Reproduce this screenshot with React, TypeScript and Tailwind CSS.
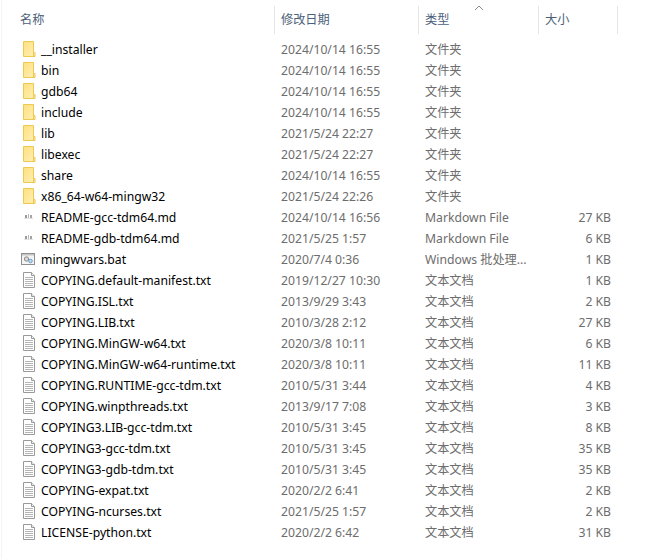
import React from "react";

type Kind = "folder" | "md" | "bat" | "txt";
type Row = [string, string, string, string, Kind];

const rows: Row[] = [
  ["__installer", "2024/10/14 16:55", "文件夹", "", "folder"],
  ["bin", "2024/10/14 16:55", "文件夹", "", "folder"],
  ["gdb64", "2024/10/14 16:55", "文件夹", "", "folder"],
  ["include", "2024/10/14 16:55", "文件夹", "", "folder"],
  ["lib", "2021/5/24 22:27", "文件夹", "", "folder"],
  ["libexec", "2021/5/24 22:27", "文件夹", "", "folder"],
  ["share", "2024/10/14 16:55", "文件夹", "", "folder"],
  ["x86_64-w64-mingw32", "2021/5/24 22:26", "文件夹", "", "folder"],
  ["README-gcc-tdm64.md", "2024/10/14 16:56", "Markdown File", "27 KB", "md"],
  ["README-gdb-tdm64.md", "2021/5/25 1:57", "Markdown File", "6 KB", "md"],
  ["mingwvars.bat", "2020/7/4 0:36", "Windows 批处理...", "1 KB", "bat"],
  ["COPYING.default-manifest.txt", "2019/12/27 10:30", "文本文档", "1 KB", "txt"],
  ["COPYING.ISL.txt", "2013/9/29 3:43", "文本文档", "2 KB", "txt"],
  ["COPYING.LIB.txt", "2010/3/28 2:12", "文本文档", "27 KB", "txt"],
  ["COPYING.MinGW-w64.txt", "2020/3/8 10:11", "文本文档", "6 KB", "txt"],
  ["COPYING.MinGW-w64-runtime.txt", "2020/3/8 10:11", "文本文档", "11 KB", "txt"],
  ["COPYING.RUNTIME-gcc-tdm.txt", "2010/5/31 3:44", "文本文档", "4 KB", "txt"],
  ["COPYING.winpthreads.txt", "2013/9/17 7:08", "文本文档", "3 KB", "txt"],
  ["COPYING3.LIB-gcc-tdm.txt", "2010/5/31 3:45", "文本文档", "8 KB", "txt"],
  ["COPYING3-gcc-tdm.txt", "2010/5/31 3:45", "文本文档", "35 KB", "txt"],
  ["COPYING3-gdb-tdm.txt", "2010/5/31 3:45", "文本文档", "35 KB", "txt"],
  ["COPYING-expat.txt", "2020/2/2 6:41", "文本文档", "2 KB", "txt"],
  ["COPYING-ncurses.txt", "2021/5/25 1:57", "文本文档", "2 KB", "txt"],
  ["LICENSE-python.txt", "2020/2/2 6:42", "文本文档", "31 KB", "txt"],
];

function Icon({ kind }: { kind: Kind }) {
  const cls = "shrink-0 self-start mt-[1px]";
  if (kind === "folder")
    return (
      <svg width="16" height="16" viewBox="0 0 16 16" className={cls}>
        <defs>
          <linearGradient id="fld" x1="0" y1="0" x2="1" y2="1">
            <stop offset="0" stopColor="#ffe07f" />
            <stop offset="1" stopColor="#fff0b8" />
          </linearGradient>
        </defs>
        <path d="M3.5 0.5h10v11h1.5v4H3.5z" fill="url(#fld)" stroke="#eec94f" />
        <path d="M13.5 11.5v4" stroke="#eec94f" />
      </svg>
    );
  if (kind === "md")
    return (
      <svg width="16" height="16" viewBox="0 0 16 16" className={cls}>
        <rect x="5" y="6" width="2" height="3" fill="#9a9a9a" />
        <rect x="8" y="5" width="1" height="4" fill="#b8b8b8" />
        <rect x="10" y="6" width="2" height="3" fill="#a4a4a4" />
        <rect x="4" y="9" width="9" height="1" fill="#e2e2e2" />
      </svg>
    );
  if (kind === "bat")
    return (
      <svg width="16" height="16" viewBox="0 0 16 16" className={cls}>
        <rect x="1.5" y="2.5" width="13" height="11" fill="#f4f4f4" stroke="#8f8f8f" />
        <rect x="2" y="3" width="12" height="1.5" fill="#c4c4c4" />
        <circle cx="6.5" cy="8" r="2.2" fill="#d8d8d8" stroke="#8c8c8c" />
        <circle cx="10.5" cy="10" r="1.8" fill="#bcdcf2" stroke="#6f9fc4" />
      </svg>
    );
  return (
    <svg width="16" height="16" viewBox="0 0 16 16" className={cls}>
      <path d="M3.5 0.5h8l3 3v12h-11z" fill="#ffffff" stroke="#9a9a9a" />
      <path d="M11.5 0.5v3h3" fill="#eeeeee" stroke="#9a9a9a" />
      <path d="M5 5.5h8M5 7.5h8M5 9.5h8M5 11.5h8M5 13.5h8" stroke="#b4b4b4" />
    </svg>
  );
}

const headerCell = "h-[28px] border-l border-[#e5e5e5] pl-[6px] flex items-center text-[#4c607a]";

export default function App() {
  return (
    <div
      className="w-[660px] h-[559px] overflow-hidden bg-white pl-[1px] text-[12.2px]"
      style={{ fontFamily: '"Noto Sans", "Noto Sans CJK SC", sans-serif' }}
    >
      <div className="h-full border-l border-[#f4f4f4]">
        <div className="relative grid grid-cols-[272px_144px_120px_80px] pt-[6px] h-[40px] items-start">
          <div className="h-[28px] pl-[18px] flex items-center text-[#4c607a]">名称</div>
          <div className={headerCell}>修改日期</div>
          <div className={headerCell}>类型</div>
          <div className={`${headerCell} border-r`}>大小</div>
          <svg width="10" height="6" viewBox="0 0 10 6" className="absolute left-[472px] top-[5px]">
            <path d="M1 5l4-4 4 4" fill="none" stroke="#8a8a8a" />
          </svg>
        </div>
        <div className="flex flex-col">
          {rows.map(([name, date, type, size, kind]) => (
            <div key={name} className="grid grid-cols-[272px_144px_120px_73px] h-[21px] items-center">
              <div className="flex items-center h-[21px] pl-[18px] gap-[5px] text-[#000000] whitespace-nowrap">
                <Icon kind={kind} />
                <span>{name}</span>
              </div>
              <div className="pl-[7px] text-[#6d6d6d] whitespace-nowrap">{date}</div>
              <div className="pl-[7px] text-[#6d6d6d] whitespace-nowrap">{type}</div>
              <div className="text-right text-[#6d6d6d] whitespace-nowrap">{size}</div>
            </div>
          ))}
        </div>
      </div>
    </div>
  );
}
